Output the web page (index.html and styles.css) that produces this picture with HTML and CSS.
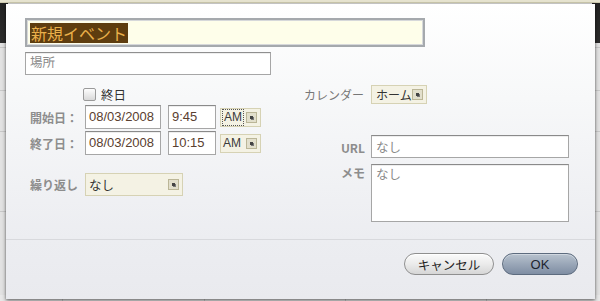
FILE: index.html
```html
<!DOCTYPE html>
<html lang="ja">
<head>
<meta charset="utf-8">
<link rel="stylesheet" href="styles.css">
</head>
<body>
<div class="page">
  <div class="topline"></div>
  <div class="bg">
    <div class="bg-left"></div>
    <div class="bg-right"></div>
    <div class="bg-bottom">
      <span class="vl" style="left:62px"></span>
      <span class="vl" style="left:204px"></span>
      <span class="vl" style="left:345px"></span>
      <span class="vl" style="left:486px"></span>
    </div>
  </div>

  <div class="dialog">
    <div class="dbody">
      <div class="title-box"><span class="sel">新規イベント</span></div>
      <div class="loc-box">場所</div>

      <div class="cols">
        <div class="leftcol">
          <div class="allday"><span class="cb"></span><span class="allday-t">終日</span></div>
          <div class="row r-start">
            <span class="lbl">開始日：</span>
            <span class="inp date">08/03/2008</span>
            <span class="inp time">9:45</span>
            <span class="sel-s ampm focus"><span class="st">AM</span><span class="sb"><i></i></span></span>
          </div>
          <div class="row r-end">
            <span class="lbl">終了日：</span>
            <span class="inp date">08/03/2008</span>
            <span class="inp time">10:15</span>
            <span class="sel-s ampm"><span class="st">AM</span><span class="sb"><i></i></span></span>
          </div>
          <div class="row r-rep">
            <span class="lbl">繰り返し</span>
            <span class="sel-s rep"><span class="st">なし</span><span class="sb"><i></i></span></span>
          </div>
        </div>
        <div class="rightcol">
          <div class="rrow r-cal">
            <span class="rlbl">カレンダー</span>
            <span class="sel-s cal"><span class="st">ホーム</span><span class="sb"><i></i></span></span>
          </div>
          <div class="rrow r-url">
            <span class="rlbl b">URL</span>
            <span class="inp url">なし</span>
          </div>
          <div class="rrow r-memo">
            <span class="rlbl b">メモ</span>
            <span class="inp memo">なし</span>
          </div>
        </div>
      </div>
    </div>
    <div class="dfoot">
      <span class="btn cancel">キャンセル</span>
      <span class="btn ok">OK</span>
    </div>
  </div>
</div>
</body>
</html>
```

FILE: styles.css
```css
* { box-sizing: border-box; }
html, body { margin: 0; padding: 0; }
body {
  width: 600px; height: 301px; overflow: hidden;
  font-family: "Liberation Sans", "Noto Sans CJK JP", sans-serif;
  background: #e4e4e4;
}
.page { position: relative; width: 600px; height: 301px; }
.topline { height: 3px; background: #e6e3cf; border-bottom: 1px solid #cfcbb0; }
.bg { position: absolute; left: 0; top: 3px; right: 0; bottom: 0; }
.bg-left, .bg-right {
  position: absolute; top: 0; width: 8px; height: 298px;
  background:
    linear-gradient(#232323, #2c2c2c) 0 0 / 100% 40px no-repeat,
    linear-gradient(#c8c8c8, #c8c8c8) 0 44px / 100% 1px no-repeat,
    linear-gradient(#c8c8c8, #c8c8c8) 0 87px / 100% 1px no-repeat,
    linear-gradient(#c8c8c8, #c8c8c8) 0 128px / 100% 1px no-repeat,
    linear-gradient(#c8c8c8, #c8c8c8) 0 208px / 100% 1px no-repeat,
    #e2e2e2;
}
.bg-left { left: 0; }
.bg-right { right: 0; }
.bg-bottom { position: absolute; left: 0; right: 0; bottom: 0; height: 6px; background: #e8e8e8; }
.vl { position: absolute; top: 0; bottom: 0; width: 1px; background: #c8c8c8; }

.dialog {
  position: absolute; left: 6px; top: 4px; width: 589px; height: 295px;
  background: #ebecf0;
  box-shadow: 0 2px 4px rgba(0,0,0,0.45), 0 0 2px rgba(0,0,0,0.3);
  display: flex; flex-direction: column;
}
.dbody {
  height: 236px;
  padding: 14px 0 0 19px;
  background: linear-gradient(#ffffff, #f7f8f9 40%, #ecedf1);
  border-bottom: 1px solid #d8d9dd;
  box-shadow: 0 1px 0 #fafafb;
}
.dfoot {
  flex: 1;
  display: flex; justify-content: flex-end; align-items: flex-start;
  gap: 8px;
  padding: 13px 17px 0 0;
  background: linear-gradient(#ecedf1, #e9eaee);
}

.title-box {
  width: 400px; height: 29px;
  border: 2px solid #a5a9ad;
  box-shadow: inset 0 0 0 1px #d6d8da;
  background: #fefeea;
  padding: 3px 0 0 3px;
}
.sel {
  display: inline-block; height: 20px;
  background: #5e3d0f; color: #eab04a;
  font-size: 16px; line-height: 20px; padding: 0 1px;
  font-family: "Noto Sans CJK JP", sans-serif;
}
.loc-box {
  margin-top: 5px;
  width: 246px; height: 23px;
  border: 1px solid #a6a6a6; border-top-color: #8f8f8f;
  background: #fff;
  color: #8a8a8a; font-size: 12.5px; line-height: 21px; padding-left: 4px;
  box-shadow: inset 0 1px 0 #eee;
}

.cols { display: flex; }
.leftcol { width: 279px; padding-left: 5px; }
.rightcol { flex: 1; }

.allday { display: flex; align-items: center; margin-top: 12px; padding-left: 53px; height: 14px; }
.cb {
  width: 13px; height: 13px; border: 1px solid #9a9a9a; border-radius: 2px;
  background: linear-gradient(#fdfdfd, #d9d9d9);
}
.allday-t { margin-left: 5px; font-size: 12.5px; color: #333; font-family: "Noto Sans CJK JP", sans-serif; }

.row { display: flex; align-items: center; }
.r-start { margin-top: 4px; }
.r-end { margin-top: 2px; }
.r-rep { margin-top: 18px; }
.lbl { width: 55px; font-size: 12px; color: #8d8d8d; font-weight: bold; font-family: "Noto Sans CJK JP", sans-serif; white-space: nowrap; }

.inp {
  display: block; height: 24px;
  border: 1px solid #a6a6a6; border-top-color: #8a8a8a;
  background: #fff;
  color: #5a4030; font-size: 13px; line-height: 22px; padding-left: 3px;
  box-shadow: inset 0 1px 0 #eee;
}
.date { width: 76px; }
.time { width: 48px; margin-left: 7px; }

.sel-s {
  display: flex; align-items: center; justify-content: space-between;
  height: 19px;
  border: 1px solid #d6d2b4;
  background: #f4f2e4;
  padding: 0 3px 0 2px;
}
.sel-s .st { font-size: 12px; color: #333; font-family: "Noto Sans CJK JP", sans-serif; line-height: 15px; }
.sb {
  width: 11px; height: 11px; border: 1px solid #bbb697; background: #e2dfcc;
  position: relative;
}
.sb i { position: absolute; left: 3px; top: 3px; width: 3px; height: 3px; background: #444; box-shadow: 1px 1px 0 #777; }
.ampm { width: 41px; margin-left: 4px; }
.ampm .st { font-family: "Liberation Sans", sans-serif; color: #3a3a3a; font-size: 12px; }
.focus .st { outline: 1px dotted #555; padding: 0 1px; }
.rep { width: 98px; height: 23px; margin-left: 0; padding-left: 3px; }
.rep .st { font-size: 12.5px; }

.rightcol .rrow { display: flex; align-items: flex-start; }
.rlbl { width: 67px; font-size: 12px; color: #808080; font-family: "Noto Sans CJK JP", sans-serif; white-space: nowrap; }
.rlbl.b { text-align: right; padding-right: 6px; font-weight: bold; color: #8d8d8d; }
.r-cal { margin-top: 10px; align-items: center !important; }
.r-cal .rlbl { margin-top: 0; color: #777; }
.cal { width: 56px; height: 19px; padding-left: 4px; }
.r-url { margin-top: 31px; }
.r-url .rlbl { margin-top: 4px; }
.url { width: 198px; height: 23px; color: #8a8a8a; font-size: 12.5px; font-family: "Noto Sans CJK JP", sans-serif; line-height: 21px; padding-left: 4px; }
.r-memo { margin-top: 6px; }
.r-memo .rlbl { margin-top: 0; }
.memo { width: 198px; height: 58px; color: #8a8a8a; font-size: 12.5px; font-family: "Noto Sans CJK JP", sans-serif; line-height: 18px; padding-left: 4px; }

.btn {
  display: flex; align-items: center; justify-content: center;
  height: 22px; border-radius: 11px;
  font-size: 12.5px; color: #222;
  font-family: "Noto Sans CJK JP", sans-serif;
}
.cancel {
  width: 90px;
  border: 1px solid #8f8f8f;
  background: linear-gradient(#fbfbfb, #ebebeb 50%, #d6d6d6);
  box-shadow: inset 0 1px 0 #fff;
}
.ok {
  width: 76px;
  border: 1px solid #5d6b7e;
  background: linear-gradient(#b8c2ce, #9aa7b8 50%, #7f8ea3);
  box-shadow: inset 0 1px 0 #d0d7e0;
  font-family: "Liberation Sans", sans-serif; font-size: 13px; color: #1d2430;
}
```
